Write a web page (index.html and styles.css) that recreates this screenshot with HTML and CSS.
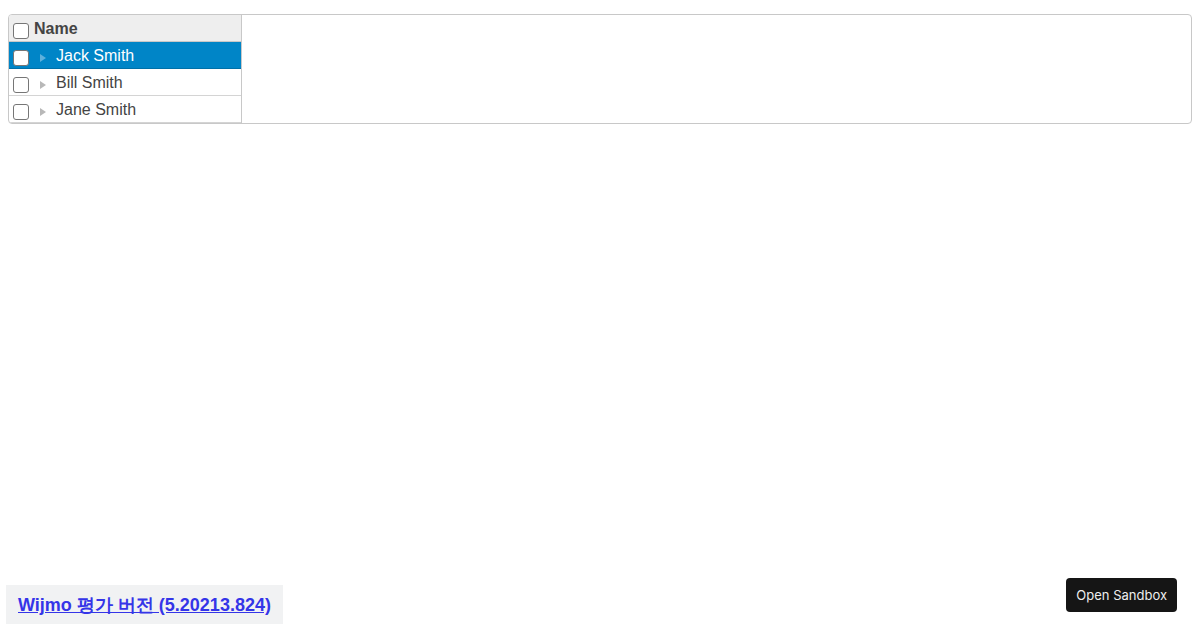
FILE: index.html
```html
<!DOCTYPE html>
<html lang="ko">
<head>
    <meta charset="UTF-8">
    <meta name="viewport" content="width=device-width, initial-scale=1.0">
    <title>FlexGrid tree</title>
    <link rel="stylesheet" href="styles.css">
</head>
<body>
    <div class="grid">
        <div class="column">
            <div class="row header">
                <input type="checkbox" class="check">
                <span class="name">Name</span>
            </div>
            <div class="row selected">
                <input type="checkbox" class="check">
                <span class="arrow"></span>
                <span class="name">Jack Smith</span>
            </div>
            <div class="row">
                <input type="checkbox" class="check">
                <span class="arrow"></span>
                <span class="name">Bill Smith</span>
            </div>
            <div class="row">
                <input type="checkbox" class="check">
                <span class="arrow"></span>
                <span class="name">Jane Smith</span>
            </div>
        </div>
    </div>

    <div class="footer">
        <a class="eval" href="#">Wijmo 평가 버전 (5.20213.824)</a>
        <button class="sandbox">Open Sandbox</button>
    </div>
</body>
</html>
```

FILE: styles.css
```css
body {
    margin: 0;
    padding: 14px 8px 0 8px;
    height: 630px;
    box-sizing: border-box;
    font-family: "Liberation Sans", Arial, sans-serif;
    display: flex;
    flex-direction: column;
    background: #fff;
}
.grid {
    border: 1px solid #c8c8c8;
    border-radius: 4px;
    height: 108px;
    display: flex;
    overflow: hidden;
}
.column {
    width: 232px;
    border-right: 1px solid #c8c8c8;
    display: flex;
    flex-direction: column;
}
.row {
    height: 27px;
    padding-top: 2px;
    box-sizing: border-box;
    border-bottom: 1px solid #d4d4d4;
    display: flex;
    align-items: center;
    font-size: 16px;
    color: #444;
}
.row.header {
    background: #eee;
    font-weight: bold;
    border-bottom-color: #c8c8c8;
}
.row.selected {
    background: #0085c7;
    color: #fff;
    border-bottom-color: #0070a8;
}
.check {
    width: 16px;
    height: 16px;
    margin: 4px 0 0 4px;
    appearance: none;
    border: 1px solid #767676;
    border-radius: 3px;
    background: #fff;
    box-sizing: border-box;
}
.header .name {
    margin-left: 5px;
}
.arrow {
    width: 0;
    height: 0;
    margin: 3px 10px 0 11px;
    border-top: 4px solid transparent;
    border-bottom: 4px solid transparent;
    border-left: 6px solid #b8b8b8;
}
.selected .arrow {
    border-left-color: #5fb0dc;
}
.footer {
    margin-top: auto;
    display: flex;
    justify-content: space-between;
    align-items: flex-end;
    padding: 0 15px 6px 0;
    margin-left: -2px;
}
.eval {
    background: #f1f2f3;
    padding: 8px 12px 7px 12px;
    font-size: 18px;
    font-weight: bold;
    color: #3535e8;
    text-decoration: underline;
}
.sandbox {
    background: #151515;
    color: #eee;
    border: none;
    border-radius: 4px;
    font-family: Inter, "Noto Sans", sans-serif;
    font-size: 13px;
    height: 34px;
    padding: 0 10px;
    margin-bottom: 12px;
}
```
